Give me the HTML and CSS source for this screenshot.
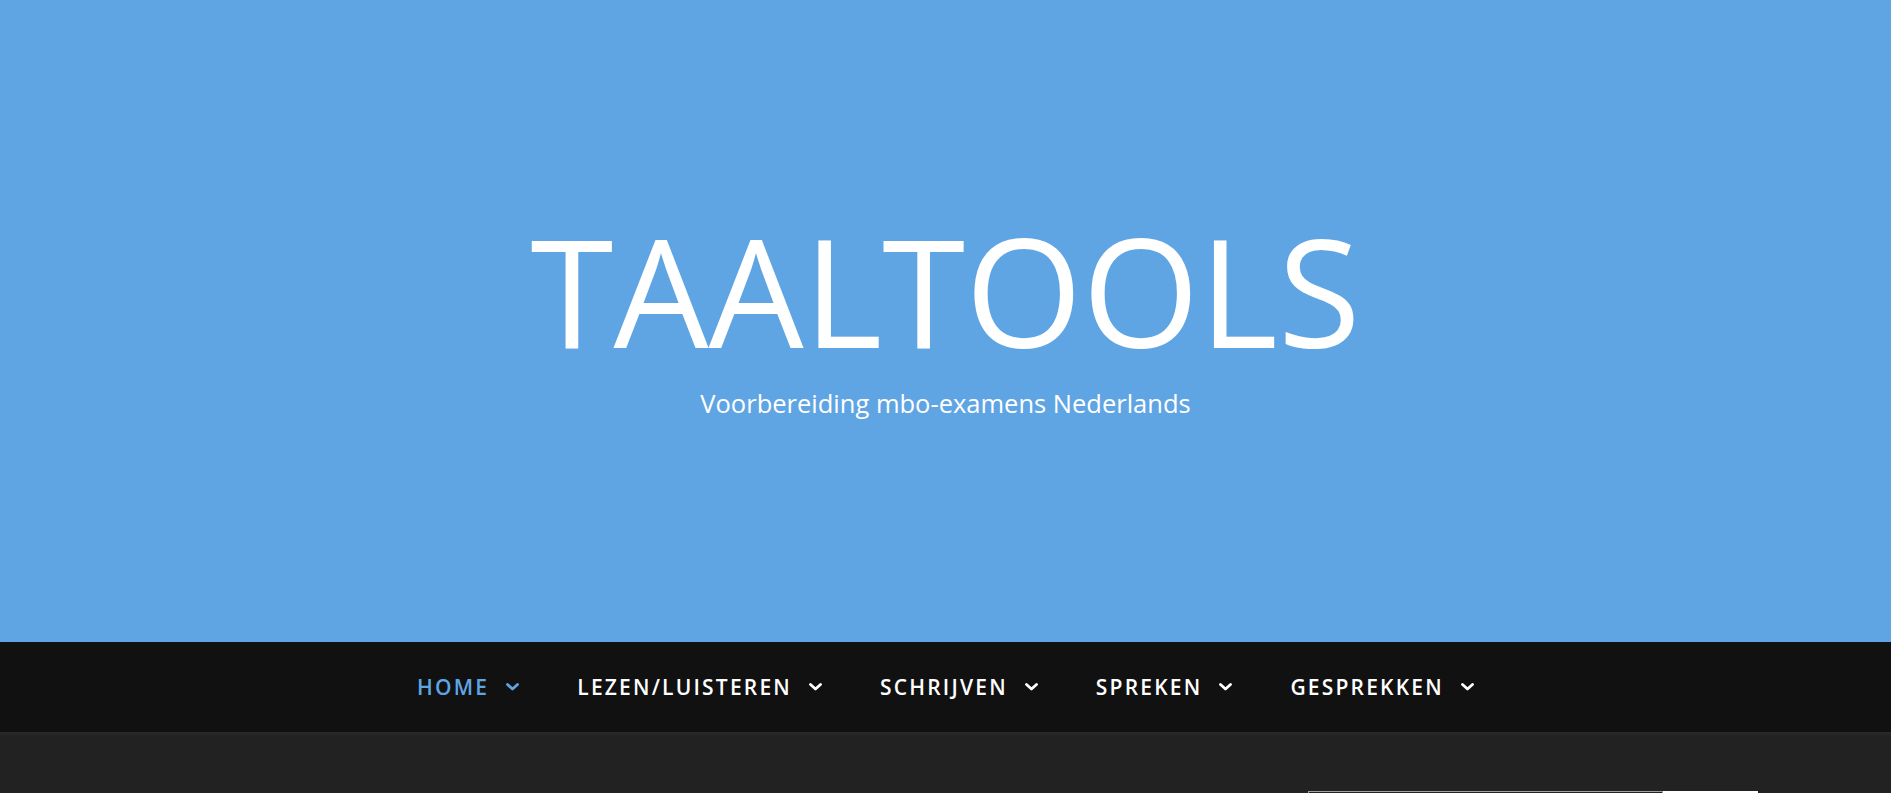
FILE: index.html
```html
<!DOCTYPE html>
<html lang="nl">
<head>
<meta charset="utf-8">
<title>Taaltools</title>
<link rel="stylesheet" href="styles.css">
</head>
<body>
<header class="site-header">
  <h1 class="site-title">TAALTOOLS</h1>
  <p class="site-description">Voorbereiding mbo-examens Nederlands</p>
</header>

<nav class="main-nav">
  <ul class="menu">
    <li class="menu-item current"><a href="#">HOME</a><svg class="caret" viewBox="0 0 13 8"><polyline points="1.5,1.5 6.5,6 11.5,1.5"/></svg></li>
    <li class="menu-item"><a href="#">LEZEN/LUISTEREN</a><svg class="caret" viewBox="0 0 13 8"><polyline points="1.5,1.5 6.5,6 11.5,1.5"/></svg></li>
    <li class="menu-item"><a href="#">SCHRIJVEN</a><svg class="caret" viewBox="0 0 13 8"><polyline points="1.5,1.5 6.5,6 11.5,1.5"/></svg></li>
    <li class="menu-item"><a href="#">SPREKEN</a><svg class="caret" viewBox="0 0 13 8"><polyline points="1.5,1.5 6.5,6 11.5,1.5"/></svg></li>
    <li class="menu-item"><a href="#">GESPREKKEN</a><svg class="caret" viewBox="0 0 13 8"><polyline points="1.5,1.5 6.5,6 11.5,1.5"/></svg></li>
  </ul>
</nav>

<div class="site-content">
  <div class="container">
    <main class="content-area"></main>
    <aside class="sidebar">
      <form class="search-form">
        <input class="search-field" type="search" aria-label="Zoeken">
        <button class="search-submit" type="button">Zoeken</button>
      </form>
    </aside>
  </div>
</div>
</body>
</html>
```

FILE: styles.css
```css
html, body {
  margin: 0;
  padding: 0;
}

body {
  background: #222222;
  font-family: "Open Sans", "Noto Sans", sans-serif;
  color: #ffffff;
  overflow: hidden;
}

/* Header banner */
.site-header {
  box-sizing: border-box;
  height: 642px;
  padding-top: 215px;
  background: #5fa5e4;
  text-align: center;
}

.site-title {
  margin: 0;
  font-size: 150.5px;
  font-weight: 400;
  line-height: 1;
  color: #ffffff;
}

.site-description {
  margin: 22px 0 0;
  font-size: 25.5px;
  line-height: 1.2;
  color: #ffffff;
}

/* Primary navigation */
.main-nav {
  height: 90px;
  background: #111111;
}

.menu {
  list-style: none;
  margin: 0;
  padding: 0;
  height: 100%;
  display: flex;
  justify-content: center;
  align-items: center;
}

.menu-item {
  display: flex;
  align-items: center;
  padding: 0 29px;
}

.menu-item a {
  color: #ffffff;
  text-decoration: none;
  font-size: 21px;
  font-weight: 600;
  letter-spacing: 2.2px;
  line-height: 1;
}

.menu-item.current a {
  color: #5fa5e4;
}

.caret {
  width: 13px;
  height: 8px;
  margin-left: 17px;
  fill: none;
  stroke: #ffffff;
  stroke-width: 2.8;
  stroke-linecap: round;
  stroke-linejoin: round;
}

.menu-item.current .caret {
  stroke: #5fa5e4;
}

/* Content area */
.site-content {
  box-shadow: inset 0 4px 4px -2px rgba(255, 255, 255, 0.05);
  padding-top: 59px;
  min-height: 200px;
}

.container {
  width: 1625px;
  margin: 0 auto;
  display: flex;
  justify-content: space-between;
}

.content-area {
  flex: 1;
}

.sidebar {
  width: 450px;
}

.search-form {
  display: flex;
  height: 44px;
}

.search-field {
  box-sizing: border-box;
  width: 355px;
  height: 44px;
  margin: 0;
  border: 1px solid #a0a0a0;
  background: #222222;
}

.search-submit {
  box-sizing: border-box;
  flex: 1;
  height: 44px;
  margin: 0;
  border: 1px solid #ffffff;
  background: #ffffff;
  color: #222222;
  font-family: inherit;
}
```
